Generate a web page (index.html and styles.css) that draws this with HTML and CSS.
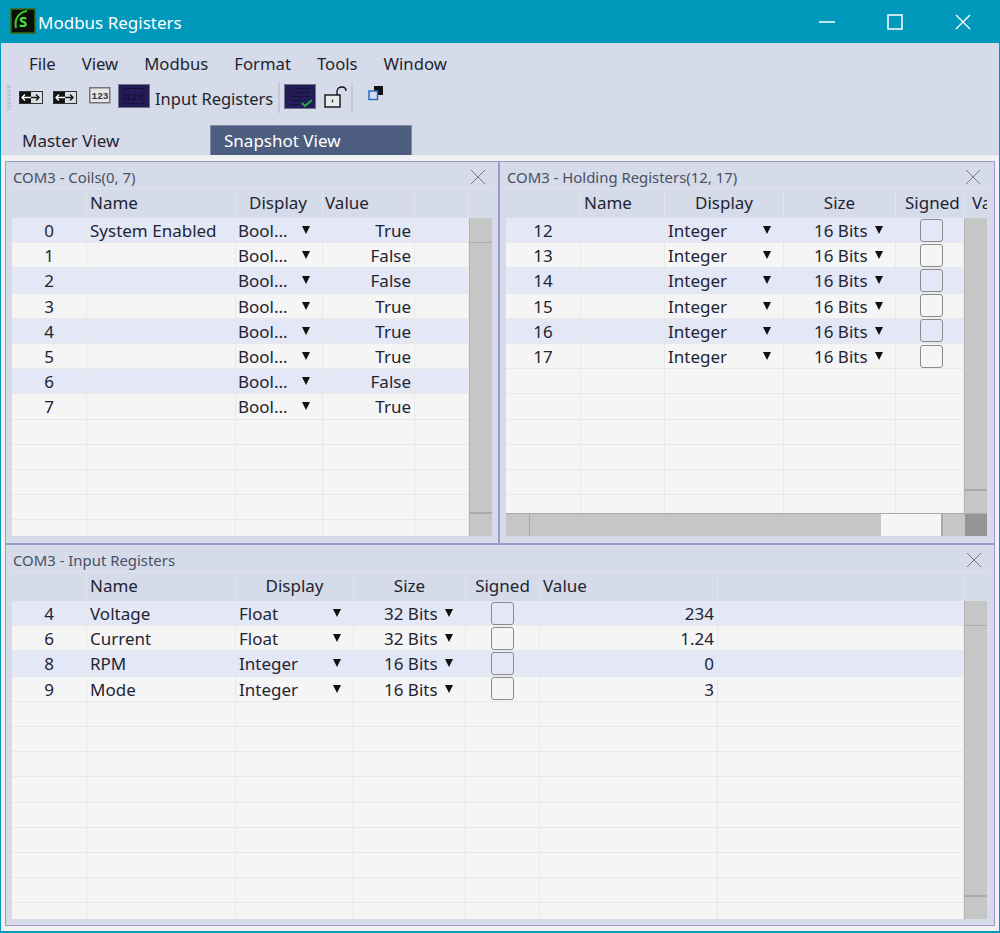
FILE: index.html
```html
<!DOCTYPE html>
<html lang="en">
<head>
<meta charset="utf-8">
<title>Modbus Registers</title>
<link rel="stylesheet" href="styles.css">
</head>
<body>
<div class="window">
  <header class="titlebar">
    <svg class="appicon" width="26" height="26" viewBox="0 0 26 26"><rect x="1" y="1" width="24" height="24" fill="#0a0f0a" stroke="#3f6a12" stroke-width="1.5"/><path d="M6 20C4 11 9 4 17 3" fill="none" stroke="#39d62a" stroke-width="2"/><text x="9" y="19" class="appicon-s">S</text></svg>
    <span class="title">Modbus Registers</span>
    <div class="winbtns">
      <svg width="16" height="16" viewBox="0 0 16 16"><path d="M0 8H16" stroke="#fff" stroke-width="1.5"/></svg>
      <svg width="16" height="16" viewBox="0 0 16 16"><rect x="1" y="1" width="14" height="14" fill="none" stroke="#fff" stroke-width="1.5"/></svg>
      <svg width="16" height="16" viewBox="0 0 16 16"><path d="M1 1L15 15M15 1L1 15" stroke="#fff" stroke-width="1.4"/></svg>
    </div>
  </header>
  <div class="chrome">
    <nav class="menu"><span>File</span><span>View</span><span>Modbus</span><span>Format</span><span>Tools</span><span>Window</span></nav>
    <div class="toolbar">
      <span class="grip"></span>
      <svg class="t1" width="24" height="14" viewBox="0 0 24 14"><rect x="0.5" y="0.5" width="23" height="12" fill="#111" stroke="#333"/><rect x="12" y="1" width="11" height="11" fill="#d9dde6"/><path d="M3 6.5H20M6 3.5L3 6.5L6 9.5M17 3.5L20 6.5L17 9.5" fill="none" stroke="#fff" stroke-width="1.4"/><path d="M12 6.5H20M17 3.5L20 6.5L17 9.5" fill="none" stroke="#111" stroke-width="1.4"/></svg>
      <svg class="t2" width="24" height="14" viewBox="0 0 24 14"><rect x="0.5" y="0.5" width="23" height="12" fill="#111" stroke="#333"/><rect x="12" y="1" width="11" height="11" fill="#d9dde6"/><path d="M3 6.5H20M6 3.5L3 6.5L6 9.5M17 3.5L20 6.5L17 9.5" fill="none" stroke="#fff" stroke-width="1.4"/><path d="M12 6.5H20M17 3.5L20 6.5L17 9.5" fill="none" stroke="#111" stroke-width="1.4"/></svg>
      <svg class="t3" width="22" height="17" viewBox="0 0 22 17"><rect x="0.75" y="0.75" width="20" height="15" fill="#e4e6ea" stroke="#777" stroke-width="1.5"/><text x="11" y="12" class="icon123">123</text></svg>
      <svg class="t4" width="32" height="24" viewBox="0 0 32 24"><rect x="0.5" y="0.5" width="31" height="23" fill="#241c57" stroke="#6f7288"/><rect x="6" y="4.5" width="20" height="15" fill="none" stroke="#17123a"/><text x="16" y="15.5" class="icon123 dark">123</text></svg>
      <span class="tool-label">Input Registers</span>
      <span class="sep"></span>
      <svg class="t5" width="32" height="25" viewBox="0 0 32 25"><rect x="0.5" y="0.5" width="31" height="24" fill="#241c57" stroke="#6f7288"/><path d="M11 4.5H26M11 8.5H26M7 12.5H26M7 16.5H18M7 20.5H16" stroke="#17123a" stroke-width="1.2"/><path d="M18 19L21 22L28 16" fill="none" stroke="#27a844" stroke-width="2"/></svg>
      <svg class="t6" width="24" height="22" viewBox="0 0 24 22"><rect x="1" y="9" width="15" height="12" fill="#e8eaee" stroke="#111" stroke-width="1.4"/><path d="M8.5 13.5V16.5" stroke="#333" stroke-width="1.4"/><path d="M13 9V5.5C13 2.5 15 1 18 1C20.5 1 22 2.5 22 5" fill="none" stroke="#111" stroke-width="1.3"/></svg>
      <span class="sep s2"></span>
      <svg class="t7" width="16" height="16" viewBox="0 0 16 16"><rect x="6" y="0" width="9" height="9" fill="#111"/><rect x="1" y="5" width="8.5" height="8.5" fill="#d5dbe8" stroke="#1f6fc4" stroke-width="1.5"/></svg>
    </div>
    <div class="tabs"><span class="tab">Master View</span><span class="tab active">Snapshot View</span></div>
  </div>
  <main class="workspace">
    <section class="panel coils">
      <div class="panel-title"><span>COM3 - Coils(0, 7)</span><svg class="close" width="16" height="16" viewBox="0 0 16 16"><path d="M1 1L15 15M15 1L1 15" stroke="#77798a" stroke-width="1"/></svg></div>
      <div class="grid">
        <div class="table">
          <div class="row head"><span></span><span>Name</span><span class="c">Display</span><span>Value</span><span></span></div>
          <div class="row alt"><span class="c">0</span><span>System Enabled</span><span class="dd">Bool...</span><span class="r">True</span><span></span></div>
          <div class="row"><span class="c">1</span><span></span><span class="dd">Bool...</span><span class="r">False</span><span></span></div>
          <div class="row alt"><span class="c">2</span><span></span><span class="dd">Bool...</span><span class="r">False</span><span></span></div>
          <div class="row"><span class="c">3</span><span></span><span class="dd">Bool...</span><span class="r">True</span><span></span></div>
          <div class="row alt"><span class="c">4</span><span></span><span class="dd">Bool...</span><span class="r">True</span><span></span></div>
          <div class="row"><span class="c">5</span><span></span><span class="dd">Bool...</span><span class="r">True</span><span></span></div>
          <div class="row alt"><span class="c">6</span><span></span><span class="dd">Bool...</span><span class="r">False</span><span></span></div>
          <div class="row"><span class="c">7</span><span></span><span class="dd">Bool...</span><span class="r">True</span><span></span></div>
          <div class="row"><span></span><span></span><span></span><span></span><span></span></div>
          <div class="row"><span></span><span></span><span></span><span></span><span></span></div>
          <div class="row"><span></span><span></span><span></span><span></span><span></span></div>
          <div class="row"><span></span><span></span><span></span><span></span><span></span></div>
          <div class="row"><span></span><span></span><span></span><span></span><span></span></div>
        </div>
        <div class="vscroll"><i class="btn"></i><i class="track"></i><i class="btn end"></i></div>
      </div>
    </section>
    <section class="panel holding">
      <div class="panel-title"><span>COM3 - Holding Registers(12, 17)</span><svg class="close" width="16" height="16" viewBox="0 0 16 16"><path d="M1 1L15 15M15 1L1 15" stroke="#77798a" stroke-width="1"/></svg></div>
      <div class="grid">
        <div class="table">
          <div class="row head"><span></span><span>Name</span><span class="c">Display</span><span class="c">Size</span><span class="c signed">Signed</span></div>
          <div class="row alt"><span class="c">12</span><span></span><span class="dd wide">Integer</span><span class="dd size">16 Bits</span><span class="cb"><i></i></span></div>
          <div class="row"><span class="c">13</span><span></span><span class="dd wide">Integer</span><span class="dd size">16 Bits</span><span class="cb"><i></i></span></div>
          <div class="row alt"><span class="c">14</span><span></span><span class="dd wide">Integer</span><span class="dd size">16 Bits</span><span class="cb"><i></i></span></div>
          <div class="row"><span class="c">15</span><span></span><span class="dd wide">Integer</span><span class="dd size">16 Bits</span><span class="cb"><i></i></span></div>
          <div class="row alt"><span class="c">16</span><span></span><span class="dd wide">Integer</span><span class="dd size">16 Bits</span><span class="cb"><i></i></span></div>
          <div class="row"><span class="c">17</span><span></span><span class="dd wide">Integer</span><span class="dd size">16 Bits</span><span class="cb"><i></i></span></div>
          <div class="row"><span></span><span></span><span></span><span></span><span></span></div>
          <div class="row"><span></span><span></span><span></span><span></span><span></span></div>
          <div class="row"><span></span><span></span><span></span><span></span><span></span></div>
          <div class="row"><span></span><span></span><span></span><span></span><span></span></div>
          <div class="row"><span></span><span></span><span></span><span></span><span></span></div>
          <div class="row"><span></span><span></span><span></span><span></span><span></span></div>
        </div>
        <div class="side">
          <div class="va">Va</div>
          <div class="vscroll"><i class="track"></i><i class="btn end"></i></div>
        </div>
        <div class="hscroll"><i class="hbtn"></i><i class="htrack"></i><i class="hthumb"></i><i class="hbtn last"></i><i class="corner"></i></div>
      </div>
    </section>
    <section class="panel input">
      <div class="panel-title"><span>COM3 - Input Registers</span><svg class="close" width="16" height="16" viewBox="0 0 16 16"><path d="M1 1L15 15M15 1L1 15" stroke="#77798a" stroke-width="1"/></svg></div>
      <div class="grid">
        <div class="table">
          <div class="row head"><span></span><span>Name</span><span class="c">Display</span><span class="c">Size</span><span class="c">Signed</span><span>Value</span><span></span></div>
          <div class="row alt"><span class="c">4</span><span>Voltage</span><span class="dd wide">Float</span><span class="dd size">32 Bits</span><span class="cb"><i></i></span><span class="r">234</span><span></span></div>
          <div class="row"><span class="c">6</span><span>Current</span><span class="dd wide">Float</span><span class="dd size">32 Bits</span><span class="cb"><i></i></span><span class="r">1.24</span><span></span></div>
          <div class="row alt"><span class="c">8</span><span>RPM</span><span class="dd wide">Integer</span><span class="dd size">16 Bits</span><span class="cb"><i></i></span><span class="r">0</span><span></span></div>
          <div class="row"><span class="c">9</span><span>Mode</span><span class="dd wide">Integer</span><span class="dd size">16 Bits</span><span class="cb"><i></i></span><span class="r">3</span><span></span></div>
          <div class="row"><span></span><span></span><span></span><span></span><span></span><span></span><span></span></div>
          <div class="row"><span></span><span></span><span></span><span></span><span></span><span></span><span></span></div>
          <div class="row"><span></span><span></span><span></span><span></span><span></span><span></span><span></span></div>
          <div class="row"><span></span><span></span><span></span><span></span><span></span><span></span><span></span></div>
          <div class="row"><span></span><span></span><span></span><span></span><span></span><span></span><span></span></div>
          <div class="row"><span></span><span></span><span></span><span></span><span></span><span></span><span></span></div>
          <div class="row"><span></span><span></span><span></span><span></span><span></span><span></span><span></span></div>
          <div class="row"><span></span><span></span><span></span><span></span><span></span><span></span><span></span></div>
          <div class="row"><span></span><span></span><span></span><span></span><span></span><span></span><span></span></div>
        </div>
        <div class="vscroll"><i class="btn"></i><i class="track"></i><i class="btn end"></i></div>
      </div>
    </section>
  </main>
</div>
</body>
</html>
```
FILE: styles.css
```css
* { box-sizing: border-box; }
html, body { margin: 0; height: 100%; }
body {
  font-family: "Noto Sans", "Open Sans", sans-serif;
  font-size: 17px;
  color: #1f2433;
  overflow: hidden;
}
.window {
  width: 1000px;
  height: 933px;
  display: flex;
  flex-direction: column;
  border: solid #0099bb;
  border-width: 0 1px 2px 1px;
  background: #f2f2f4;
}
.titlebar {
  flex: 0 0 43px;
  display: flex;
  align-items: center;
  background: #0099bb;
  color: #fff;
  padding: 0 28px 0 9px;
}
.appicon { margin-top: -2px; }
.appicon-s { font: bold 15px "Noto Sans", sans-serif; fill: #46e63a; text-anchor: start; }
.title { margin-left: 2px; font-size: 17px; margin-top: 1px; }
.winbtns { margin-left: auto; display: flex; gap: 52px; margin-top: 1px; }
.chrome {
  flex: 0 0 113px;
  background: #d5dbe8;
  border-bottom: 1px solid #eceef3;
  display: flex;
  flex-direction: column;
}
.menu {
  display: flex;
  gap: 26px;
  height: 40px;
  padding: 8px 0 0 28px;
  line-height: 26px;
  font-size: 16.7px;
}
.toolbar {
  display: flex;
  align-items: center;
  height: 28px;
  padding-left: 6px;
}
.grip {
  width: 4px;
  height: 26px;
  margin-right: 8px;
  background: repeating-linear-gradient(0deg, #b8bdc9 0 1px, transparent 1px 2px);
}
.toolbar svg { display: block; flex: none; }
.t1 { margin-top: 2px; }
.t2 { margin-left: 10px; margin-top: 2px; }
.t3 { margin-left: 12px; margin-top: -3px; }
.t4 { margin-left: 7px; margin-top: -2px; }
.tool-label { margin-left: 5px; white-space: nowrap; width: 118px; font-size: 16.5px; margin-top: 2px; }
.icon123 { font: bold 9.5px "Liberation Mono", monospace; fill: #333; text-anchor: middle; }
.icon123.dark { fill: #15103a; }
.sep { flex: none; width: 2px; height: 31px; margin-left: 5px; background: #c3c9d8; }
.t5 { margin-left: 4px; margin-top: -1px; }
.t6 { margin-left: 8px; }
.s2 { margin-left: 3px; }
.t7 { margin-left: 15px; margin-top: -6px; }
.tabs {
  display: flex;
  flex: 1;
  align-items: flex-end;
}
.tab {
  height: 30px;
  line-height: 32px;
  padding-left: 21px;
  width: 209px;
}
.tab.active {
  width: 202px;
  padding-left: 13px;
  background: #4c5d7f;
  color: #fff;
  border: 1px solid #7f8aa5;
  border-bottom: 0;
  line-height: 29px;
}
.workspace {
  flex: 1;
  display: grid;
  grid-template-columns: 494px 496px;
  grid-template-rows: 383px 382px;
  padding: 5px 3px 5px 4px;
}
.panel {
  display: flex;
  flex-direction: column;
  background: #d5dbe8;
  border: 1px solid #9c9bc8;
  padding: 3px 6px 7px;
  min-width: 0;
  min-height: 0;
}
.panel.input { grid-column: 1 / 3; padding-bottom: 6px; }
.panel.holding { padding-right: 7px; }
.panel-title {
  flex: 0 0 24px;
  display: flex;
  align-items: center;
  justify-content: space-between;
  font-size: 14.9px;
  color: #4a5064;
  padding-left: 1px;
  border-bottom: 1px solid #e0e4ee;
}
.close { margin-right: 6px; }
.grid {
  flex: 1;
  display: grid;
  overflow: hidden;
  min-height: 0;
}
.coils .grid { grid-template-columns: 457px 24px; }
.holding .grid { grid-template-columns: 458px 23px; grid-template-rows: 324px 23px; }
.input .grid { grid-template-columns: 952px 23px; }
.table { overflow: hidden; background: #f5f5f5; min-height: 0; }
.row {
  display: grid;
  height: 25.2px;
  background: #f5f5f5;
  border-bottom: 1px solid #e8e8e8;
  white-space: nowrap;
}
.row > span { border-right: 1px solid #e8e8e8; padding: 0 3px; line-height: 26px; overflow: hidden; min-width: 0; }
.row.alt { background: #e3e7f6; }
.row.head { height: 29px; background: #d5dbe8; border-bottom: 0; }
.row.head > span { line-height: 27px; border-right-color: #dfe3ec; }
.coils .row { grid-template-columns: 75px 149px 87px 92px 54px; }
.coils .row > span:nth-child(3), .coils .row.head > span:nth-child(4) { padding-left: 2px; }
.coils .row.head > span:nth-child(3) { padding: 0 2px 0 0; }
.holding .row { grid-template-columns: 75px 84px 119px 112px 68px; }
.input .row { grid-template-columns: 75px 149px 118px 112px 74px 178px 246px; }
.c { text-align: center; }
.r { text-align: right; }
.row.head > .signed { padding: 0 0 0 9px; text-align: left; overflow: visible; }
.dd { position: relative; }
.dd::after {
  content: "";
  position: absolute;
  right: 12px;
  top: 8px;
  border: solid transparent;
  border-width: 8px 4.5px 0;
  border-top-color: #111;
}
.dd.size { padding-left: 30px; }
.row > .cb { display: flex; align-items: center; justify-content: center; padding: 0; }
.holding .row > .cb { padding-left: 3px; }
.cb i {
  width: 23px;
  height: 23px;
  border: 1px solid #8b8b8b;
  border-radius: 3px;
  background: transparent;
}
.vscroll {
  display: flex;
  flex-direction: column;
  background: #c6c6c6;
  margin-top: 29px;
  border-left: 1px solid #b4b4b4;
  min-height: 0;
}
.side { display: flex; flex-direction: column; min-height: 0; overflow: hidden; background: #d5dbe8; }
.side .vscroll { margin-top: 0; flex: 1; }
.va { height: 29px; line-height: 27px; padding-left: 8px; white-space: nowrap; overflow: hidden; }
.btn { flex: 0 0 24px; background: #c6c6c6; }
.btn.end { border-top: 2px solid #aaa; }
.track { flex: 1; background: #c6c6c6; border-top: 1px solid #aaa; }
.side .track { border-top: 0; }
.hscroll { grid-column: 1 / 3; display: flex; background: #c6c6c6; border-top: 1px solid #aaa; }
.hbtn { flex: 0 0 24px; background: #c6c6c6; border-right: 1px solid #aaa; }
.htrack { flex: 1; }
.hthumb { flex: 0 0 60px; background: #f5f5f5; }
.hbtn.last { border-left: 2px solid #aaa; border-right: 0; }
.corner { flex: 0 0 22px; background: #959595; }
```
